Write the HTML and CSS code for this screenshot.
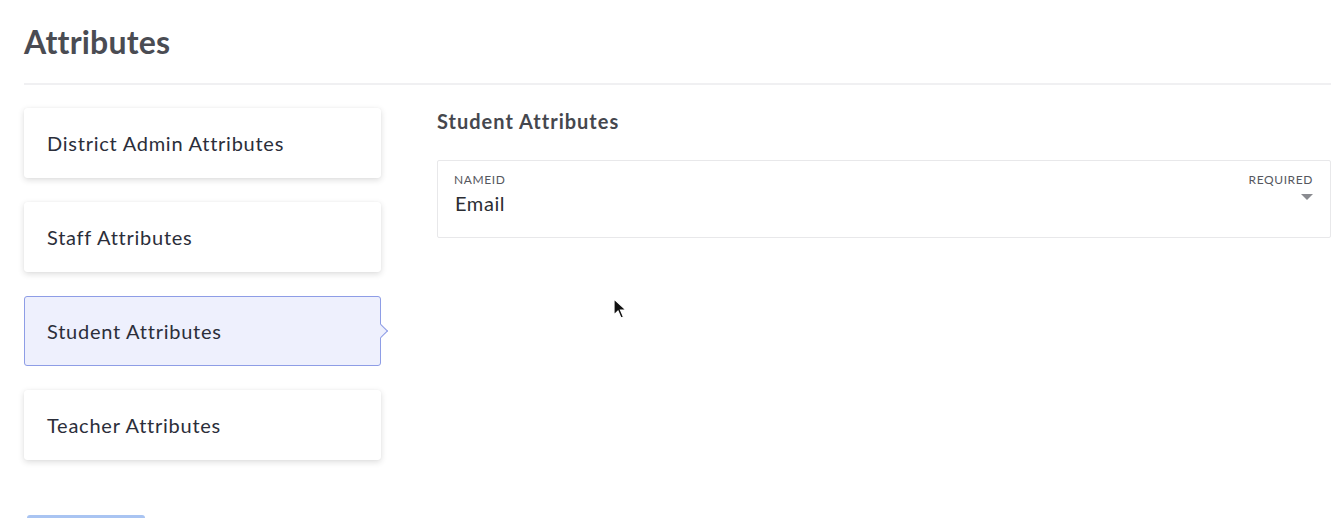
FILE: index.html
```html
<!DOCTYPE html>
<html lang="en">
<head>
  <meta charset="UTF-8">
  <meta name="viewport" content="width=device-width, initial-scale=1.0">
  <title>Attributes</title>
  <link rel="stylesheet" href="styles.css">
</head>
<body>

  <!-- Page header -->
  <header class="page-header">
    <h1>Attributes</h1>
  </header>

  <main class="layout">
    <!-- Attribute groups -->
    <aside class="groups">
      <nav class="group-list">
        <a class="group-card" href="#">District Admin Attributes</a>
        <a class="group-card" href="#">Staff Attributes</a>
        <a class="group-card active" href="#">Student Attributes</a>
        <a class="group-card" href="#">Teacher Attributes</a>
      </nav>
      <div class="save-btn"></div>
    </aside>

    <!-- Selected group -->
    <section class="details">
      <h2>Student Attributes</h2>
      <div class="field">
        <div class="field-top">
          <span class="field-label">NameID</span>
          <span class="field-label">Required</span>
        </div>
        <div class="field-row">
          <span class="field-value">Email</span>
          <span class="caret"></span>
        </div>
      </div>
    </section>
  </main>

  <!-- mouse pointer from the capture -->
  <svg class="pointer" width="14" height="22" viewBox="0 0 14 22">
    <path d="M1 1 L1 17 L5 13 L8 20 L10.5 19 L7.5 12 L13 12 Z" fill="#111" stroke="#fff" stroke-width="1.2"/>
  </svg>

</body>
</html>
```

FILE: styles.css
```css
body {
  font-family: Lato, "Open Sans", Arial, sans-serif;
  margin: 0;
  padding: 0 10px 0 24px;
  background: #fff;
  color: #2d2f38;
  overflow: hidden;
  height: 518px;
  position: relative;
}
.page-header {
  height: 83px;
  border-bottom: 2px solid #f0f0f2;
  display: flex;
  align-items: center;
}
.page-header h1 {
  margin: 0;
  font-size: 32px;
  font-weight: 700;
  letter-spacing: 0.2px;
  color: #4a4c53;
}
.layout {
  display: flex;
  gap: 56px;
  padding-top: 23px;
}
.groups {
  width: 357px;
  flex-shrink: 0;
}
.group-list {
  display: flex;
  flex-direction: column;
  gap: 24px;
}
.group-card {
  position: relative;
  display: flex;
  align-items: center;
  height: 70px;
  padding-left: 23px;
  box-sizing: border-box;
  background: #fff;
  border-radius: 3px;
  box-shadow: 0 2px 6px rgba(0, 0, 0, 0.14), 0 0 1px rgba(0, 0, 0, 0.08);
  text-decoration: none;
  font-size: 20px;
  letter-spacing: 0.75px;
  color: #2b2e3a;
}
.group-card.active {
  background: #eef0fd;
  border: 1px solid #8e9de6;
  box-shadow: none;
  padding-left: 22px;
}
.group-card.active::after {
  content: "";
  position: absolute;
  right: -6px;
  top: 50%;
  width: 9px;
  height: 9px;
  margin-top: -5px;
  background: #eef0fd;
  border-top: 1px solid #8e9de6;
  border-right: 1px solid #8e9de6;
  transform: rotate(45deg);
}
.save-btn {
  margin: 55px 0 0 3px;
  width: 118px;
  height: 36px;
  border-radius: 3px;
  background: #a9c4f2;
}
.details {
  flex: 1;
}
.details h2 {
  margin: 0 0 27px;
  padding-top: 1px;
  font-size: 20px;
  letter-spacing: 1px;
  font-weight: 700;
  color: #45474e;
}
.field {
  border: 1px solid #e8e8ea;
  border-radius: 2px;
  padding: 11px 17px 17px 16px;
  height: 78px;
  box-sizing: border-box;
}
.field-top {
  display: flex;
  justify-content: space-between;
}
.field-label {
  font-size: 12px;
  text-transform: uppercase;
  color: #55575e;
  letter-spacing: 0.6px;
}
.field-row {
  display: flex;
  justify-content: space-between;
  align-items: center;
  margin-top: 2px;
}
.field-value {
  font-size: 20px;
  letter-spacing: 0.6px;
  color: #2b2d33;
  padding-left: 1px;
  padding-top: 2px;
}
.caret {
  width: 0;
  height: 0;
  border-left: 6px solid transparent;
  border-right: 6px solid transparent;
  border-top: 6px solid #8a8b90;
  margin: 0 0 10px 0;
}
.pointer {
  position: absolute;
  left: 613px;
  top: 298px;
}
```
